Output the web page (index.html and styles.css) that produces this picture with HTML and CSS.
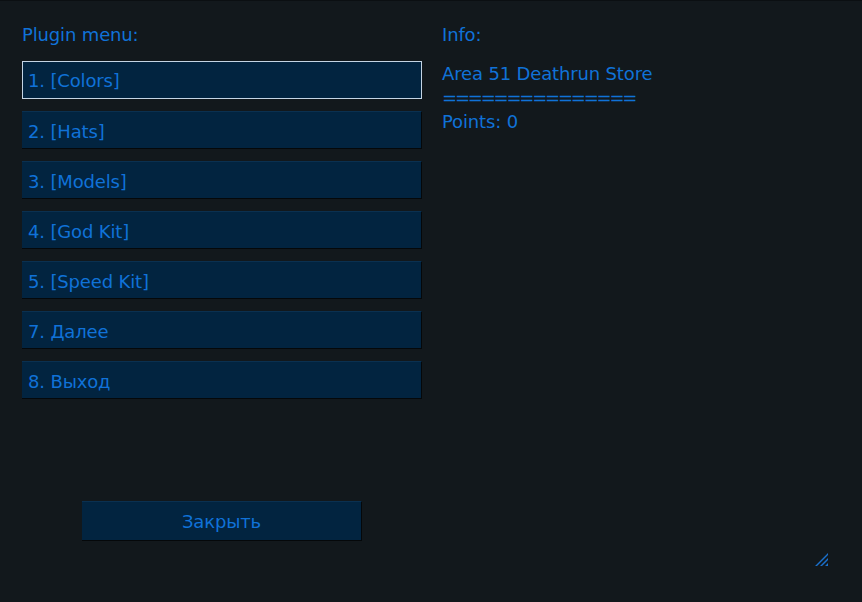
FILE: index.html
```html
<!DOCTYPE html>
<html>
<head>
<meta charset="utf-8">
<link rel="stylesheet" href="styles.css">
</head>
<body>
<div class="panel">
  <div class="cols">
    <div class="menu">
      <div class="label">Plugin menu:</div>
      <div class="list">
        <div class="item selected">1. [Colors]</div>
        <div class="item">2. [Hats]</div>
        <div class="item">3. [Models]</div>
        <div class="item">4. [God Kit]</div>
        <div class="item">5. [Speed Kit]</div>
        <div class="item">7. Далее</div>
        <div class="item">8. Выход</div>
      </div>
    </div>
    <div class="info">
      <div class="label">Info:</div>
      <div class="infotext">
        <div>Area 51 Deathrun Store</div>
        <div class="eq">===============</div>
        <div>Points: 0</div>
      </div>
    </div>
  </div>
  <div class="footer">
    <div class="close">Закрыть</div>
  </div>
  <svg class="grip" width="14" height="14" viewBox="0 0 14 14">
    <path d="M0 13 L13 0 L13 2 L2 13 Z M5 13 L13 5 L13 7 L7 13 Z M10 13 L13 10 L13 13 Z" fill="#1a70cc"/>
  </svg>
</div>
</body>
</html>
```
FILE: styles.css
```css
html, body {
  margin: 0;
  padding: 0;
  background: #12181c;
}
body {
  width: 862px;
  height: 602px;
  overflow: hidden;
  font-family: "DejaVu Sans", sans-serif;
  color: #1072d8;
}
.panel {
  position: relative;
  box-sizing: border-box;
  width: 862px;
  height: 602px;
  padding: 22px 22px 0 22px;
  border-top: 1px solid #0b0f12;
}
.cols {
  display: flex;
  gap: 20px;
}
.menu {
  width: 400px;
}
.label {
  font-size: 18px;
  height: 24px;
  line-height: 24px;
  letter-spacing: -0.15px;
}
.list {
  margin-top: 14px;
  display: flex;
  flex-direction: column;
  gap: 12px;
}
.item {
  box-sizing: border-box;
  height: 38px;
  padding-left: 6px;
  padding-top: 2px;
  font-size: 18px;
  line-height: 35px;
  letter-spacing: -0.15px;
  background: #022440;
  border-top: 1px solid #0a3050;
  border-right: 1px solid #05080a;
  border-bottom: 1px solid #05080a;
}
.item.selected {
  border: 1px solid #c4d4e4;
  padding-top: 2px;
  line-height: 34px;
  padding-left: 5px;
}
.info {
  flex: 1;
}
.infotext {
  margin-top: 14px;
  padding-top: 1px;
  font-size: 18px;
  line-height: 24px;
  letter-spacing: -0.15px;
}
.eq {
  letter-spacing: -2.2px;
}
.footer {
  margin-top: 102px;
  padding-left: 60px;
}
.close {
  box-sizing: border-box;
  width: 280px;
  height: 40px;
  padding-top: 1px;
  text-align: center;
  font-size: 18px;
  line-height: 38px;
  letter-spacing: -0.15px;
  background: #022440;
  border-top: 1px solid #0a3050;
  border-right: 1px solid #05080a;
  border-bottom: 1px solid #05080a;
}
.grip {
  position: absolute;
  left: 815px;
  top: 552px;
}
```
